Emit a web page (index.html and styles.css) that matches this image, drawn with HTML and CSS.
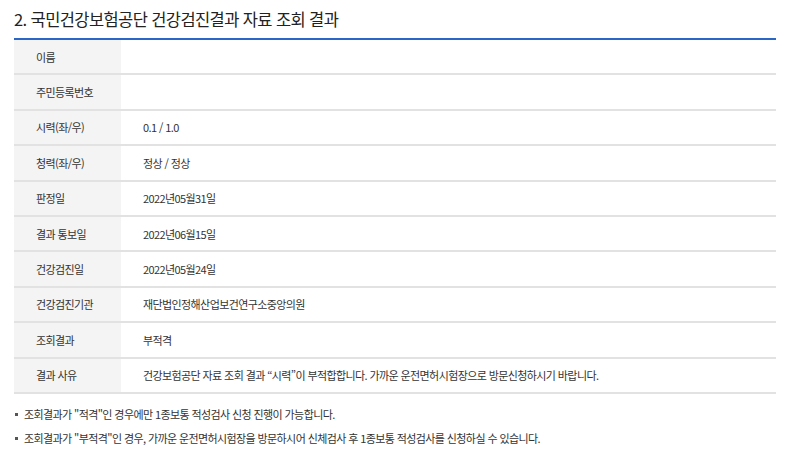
FILE: index.html
```html
<!DOCTYPE html>
<html lang="ko">
<head>
<meta charset="utf-8">
<link rel="stylesheet" href="styles.css">
</head>
<body>
<div class="wrap">
  <h2 class="title">2. 국민건강보험공단 건강검진결과 자료 조회 결과</h2>
  <table class="info">
    <tbody>
      <tr><th>이름</th><td></td></tr>
      <tr><th>주민등록번호</th><td></td></tr>
      <tr><th>시력(좌/우)</th><td>0.1 / 1.0</td></tr>
      <tr><th>청력(좌/우)</th><td>정상 / 정상</td></tr>
      <tr><th>판정일</th><td>2022년05월31일</td></tr>
      <tr><th>결과 통보일</th><td>2022년06월15일</td></tr>
      <tr><th>건강검진일</th><td>2022년05월24일</td></tr>
      <tr><th>건강검진기관</th><td>재단법인정해산업보건연구소중앙의원</td></tr>
      <tr><th>조회결과</th><td>부적격</td></tr>
      <tr><th>결과 사유</th><td>건강보험공단 자료 조회 결과 “시력”이 부적합합니다. 가까운 운전면허시험장으로 방문신청하시기 바랍니다.</td></tr>
    </tbody>
  </table>
  <ul class="notes">
    <li>조회결과가 "적격"인 경우에만 1종보통 적성검사 신청 진행이 가능합니다.</li>
    <li>조회결과가 "부적격"인 경우, 가까운 운전면허시험장을 방문하시어 신체검사 후 1종보통 적성검사를 신청하실 수 있습니다.</li>
  </ul>
</div>
</body>
</html>
```
FILE: styles.css
```css
html, body {
  margin: 0;
  padding: 0;
  background: #fff;
}
body {
  font-family: "Noto Sans CJK KR", "Noto Sans", sans-serif;
  color: #333;
}
.wrap {
  padding: 6px 24px 0 14px;
}
.title {
  margin: 0;
  font-size: 16.5px;
  font-weight: 400;
  color: #222;
  line-height: 26px;
  height: 32px;
  letter-spacing: -0.6px;
}
.info {
  width: 100%;
  border-collapse: collapse;
  border-top: 2px solid #2a66c4;
  font-size: 11px;
  letter-spacing: -0.6px;
}
.info th, .info td {
  height: 33.4px;
  padding: 0;
  border-bottom: 2px solid #e2e2e2;
  text-align: left;
  font-weight: 400;
  vertical-align: middle;
}
.info th {
  width: 107px;
  background: #f4f4f4;
  padding-left: 22px;
  box-sizing: border-box;
  color: #333;
}
.info td {
  padding-left: 22px;
  color: #333;
}
.notes {
  list-style: none;
  margin: 8px 0 0;
  padding: 0;
  font-size: 11px;
  color: #333;
  letter-spacing: -0.6px;
}
.notes li {
  position: relative;
  padding-left: 10px;
  line-height: 24px;
}
.notes li::before {
  content: "";
  position: absolute;
  left: 1px;
  top: 11px;
  width: 3px;
  height: 3px;
  background: #555;
}
```
